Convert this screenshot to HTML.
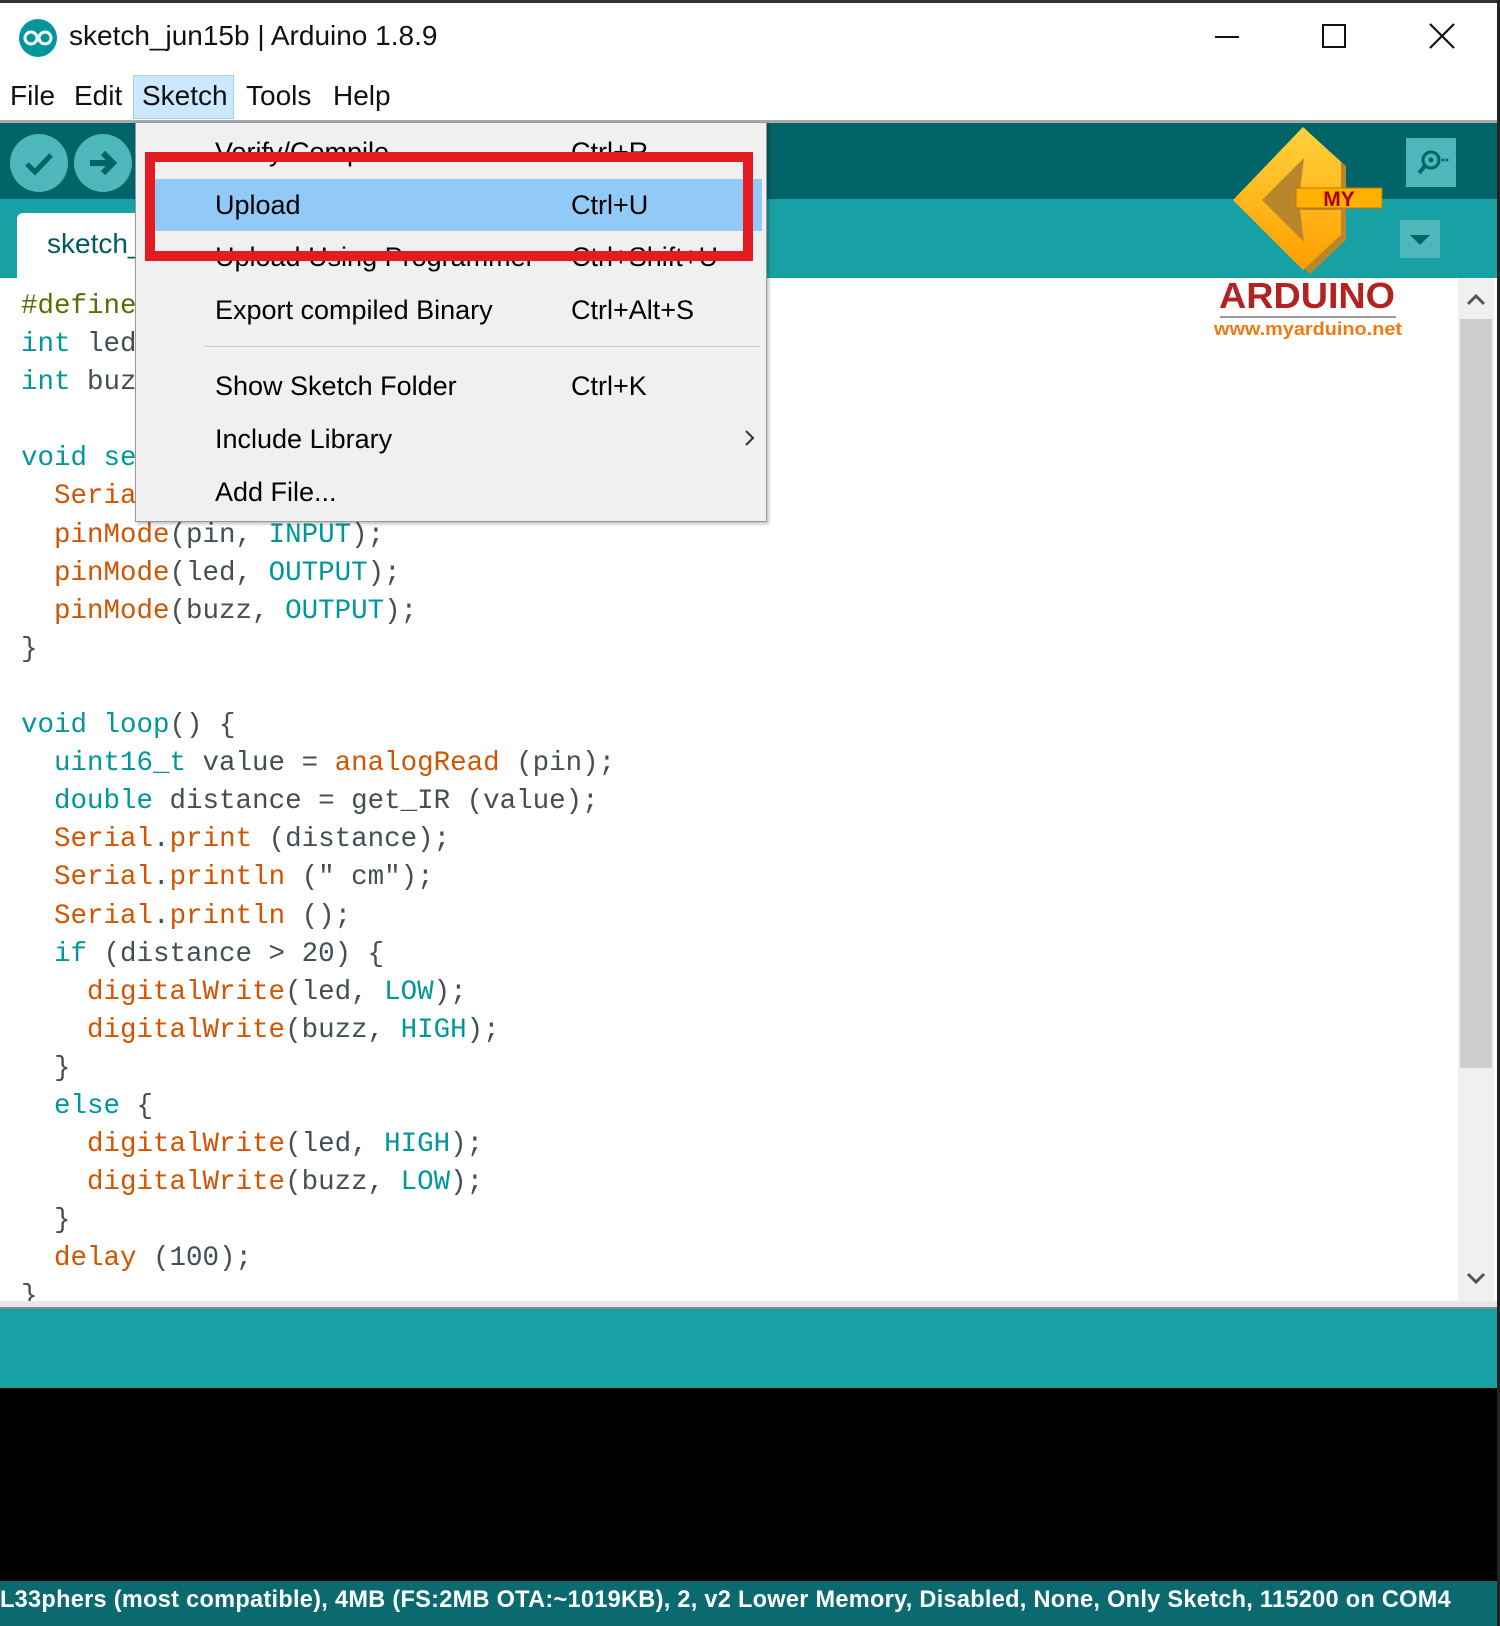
<!DOCTYPE html>
<html><head><meta charset="utf-8"><style>
*{margin:0;padding:0;box-sizing:border-box}
body{width:1500px;height:1626px;position:relative;overflow:hidden;background:#fff;font-family:"Liberation Sans",sans-serif}
.abs{position:absolute}
.code{position:absolute;left:21px;font-family:"Liberation Mono",monospace;font-size:27.5px;color:#434f54;white-space:pre;line-height:38.1px}
.k{color:#00979c}.f{color:#d35400}.d{color:#5e6d03}
.mi{position:absolute;left:215px;font-size:27px;color:#000;white-space:nowrap}
.ms{position:absolute;left:571px;font-size:27px;color:#000;white-space:nowrap}
</style></head><body>
<!-- title bar -->
<div class="abs" style="left:0;top:0;width:1500px;height:3px;background:#333"></div>
<svg class="abs" style="left:18px;top:18px" width="40" height="40" viewBox="0 0 40 40"><circle cx="20" cy="20" r="19" fill="#00979c"/><circle cx="13" cy="20" r="6" fill="none" stroke="#fff" stroke-width="3"/><circle cx="27" cy="20" r="6" fill="none" stroke="#fff" stroke-width="3"/></svg>
<div class="abs" style="left:69px;top:20px;font-size:28px;color:#111">sketch_jun15b | Arduino 1.8.9</div>
<div class="abs" style="left:1215px;top:36px;width:24px;height:2px;background:#111"></div>
<div class="abs" style="left:1322px;top:24px;width:24px;height:24px;border:2px solid #111"></div>
<svg class="abs" style="left:1429px;top:23px" width="26" height="26"><path d="M1 1L25 25M25 1L1 25" stroke="#111" stroke-width="2.2"/></svg>
<!-- menu bar -->
<div class="abs" style="left:133px;top:75px;width:101px;height:44px;background:#cce8ff;border:1px solid #99d1ff"></div>
<div class="abs" style="left:10px;top:80px;font-size:28px;color:#111">File</div>
<div class="abs" style="left:74px;top:80px;font-size:28px;color:#111">Edit</div>
<div class="abs" style="left:142px;top:80px;font-size:28px;color:#111">Sketch</div>
<div class="abs" style="left:246px;top:80px;font-size:28px;color:#111">Tools</div>
<div class="abs" style="left:333px;top:80px;font-size:28px;color:#111">Help</div>
<!-- toolbar -->
<div class="abs" style="left:0;top:120px;width:1497px;height:3px;background:#aaa"></div>
<div class="abs" style="left:0;top:123px;width:1497px;height:76px;background:#006468"></div>
<div class="abs" style="left:10px;top:134px;width:58px;height:58px;border-radius:50%;background:#4db7bb"></div>
<div class="abs" style="left:74px;top:134px;width:58px;height:58px;border-radius:50%;background:#4db7bb"></div>
<svg class="abs" style="left:10px;top:134px" width="58" height="58"><path d="M17 30l8 8 16-17" stroke="#006468" stroke-width="5" fill="none"/></svg>
<svg class="abs" style="left:74px;top:134px" width="58" height="58"><path d="M16 29h22M29 19l10 10-10 10" stroke="#006468" stroke-width="6" fill="none"/></svg>
<div class="abs" style="left:1406px;top:138px;width:50px;height:49px;background:#4db7bb"></div>
<svg class="abs" style="left:1406px;top:138px" width="50" height="49"><circle cx="25" cy="22" r="8" fill="none" stroke="#006468" stroke-width="3"/><circle cx="25" cy="22" r="2.5" fill="#006468"/><path d="M19 28l-6 7" stroke="#006468" stroke-width="4"/><circle cx="37" cy="22" r="1.5" fill="#006468"/><circle cx="41" cy="22" r="1.5" fill="#006468"/></svg>
<!-- tab strip -->
<div class="abs" style="left:0;top:199px;width:1497px;height:79px;background:#17a1a5"></div>
<div class="abs" style="left:17px;top:213px;width:200px;height:65px;background:#fff;border-radius:6px 6px 0 0"></div>
<div class="abs" style="left:47px;top:228px;font-size:28px;color:#005c5f">sketch_jun15b</div>
<div class="abs" style="left:1400px;top:220px;width:40px;height:38px;background:#4db7bb"></div>
<svg class="abs" style="left:1400px;top:220px" width="40" height="38"><path d="M10 15h20l-10 10z" fill="#006468"/></svg>
<!-- right edge -->
<div class="abs" style="left:1497px;top:0;width:3px;height:1626px;background:#222"></div>
<!-- scrollbar -->
<div class="abs" style="left:1458px;top:278px;width:36px;height:1023px;background:#f0f0f0"></div>
<div class="abs" style="left:1460px;top:319px;width:32px;height:749px;background:#cdcdcd"></div>
<svg class="abs" style="left:1464px;top:290px" width="24" height="20"><path d="M4 14l8-8 8 8" stroke="#555" stroke-width="3" fill="none"/></svg>
<svg class="abs" style="left:1464px;top:1268px" width="24" height="20"><path d="M4 6l8 8 8-8" stroke="#555" stroke-width="3" fill="none"/></svg>
<!-- code -->
<div class="code" style="top:288px"><span class="d">#define</span> pin A0
<span class="k">int</span> led = 13;
<span class="k">int</span> buzz = 12;

<span class="k">void</span> <span class="k">setup</span>() {
  <span class="f">Serial</span>.<span class="f">begin</span>(115200);
  <span class="f">pinMode</span>(pin, <span class="k">INPUT</span>);
  <span class="f">pinMode</span>(led, <span class="k">OUTPUT</span>);
  <span class="f">pinMode</span>(buzz, <span class="k">OUTPUT</span>);
}

<span class="k">void</span> <span class="k">loop</span>() {
  <span class="k">uint16_t</span> value = <span class="f">analogRead</span> (pin);
  <span class="k">double</span> distance = get_IR (value);
  <span class="f">Serial</span>.<span class="f">print</span> (distance);
  <span class="f">Serial</span>.<span class="f">println</span> (" cm");
  <span class="f">Serial</span>.<span class="f">println</span> ();
  <span class="k">if</span> (distance &gt; 20) {
    <span class="f">digitalWrite</span>(led, <span class="k">LOW</span>);
    <span class="f">digitalWrite</span>(buzz, <span class="k">HIGH</span>);
  }
  <span class="k">else</span> {
    <span class="f">digitalWrite</span>(led, <span class="k">HIGH</span>);
    <span class="f">digitalWrite</span>(buzz, <span class="k">LOW</span>);
  }
  <span class="f">delay</span> (100);
}</div>
<!-- bottom -->
<div class="abs" style="left:0;top:1301px;width:1497px;height:8px;background:#e8e8e8;border-bottom:2px solid #888"></div>
<div class="abs" style="left:0;top:1309px;width:1497px;height:79px;background:#17a1a5"></div>
<div class="abs" style="left:0;top:1388px;width:1497px;height:193px;background:#000"></div>
<div class="abs" style="left:0;top:1581px;width:1497px;height:45px;background:#0a6a6f"></div>
<div class="abs" style="left:0;top:1586px;font-size:24px;font-weight:bold;color:#fff;white-space:nowrap;transform:scaleX(0.98);transform-origin:0 0;letter-spacing:0.3px">L33phers (most compatible), 4MB (FS:2MB OTA:~1019KB), 2, v2 Lower Memory, Disabled, None, Only Sketch, 115200 on COM4</div>
<!-- logo -->
<svg class="abs" style="left:0;top:0" width="1500" height="400">
<defs><linearGradient id="g" x1="0" y1="0" x2="0" y2="1"><stop offset="0" stop-color="#ffd23c"/><stop offset="1" stop-color="#ff9e00"/></linearGradient></defs>
<path d="M1306 130 L1346 166 L1346 240 L1310 274 L1238 204 Z" fill="#b8862b"/>
<path d="M1303 127 L1341 162 L1341 190 L1300 190 L1304 158 L1262 200 L1304 242 L1300 210 L1341 210 L1341 235 L1303 270 L1233 200 Z" fill="url(#g)"/>
<rect x="1296" y="188" width="86" height="20" fill="#ffb000" stroke="#c07a00"/>
<text x="1339" y="206" text-anchor="middle" font-family="Liberation Sans" font-weight="bold" font-size="21" fill="#a00">MY</text>
<text x="1219" y="308" font-family="Liberation Sans" font-weight="bold" font-size="36" fill="#b22222" textLength="176" lengthAdjust="spacingAndGlyphs">ARDUINO</text>
<rect x="1220" y="316" width="176" height="2" fill="#999"/>
<text x="1214" y="335" font-family="Liberation Sans" font-weight="bold" font-size="18" fill="#f07a10" textLength="188" lengthAdjust="spacingAndGlyphs">www.myarduino.net</text>
</svg>
<!-- dropdown menu -->
<div class="abs" style="left:135px;top:122px;width:632px;height:400px;background:#f0f0f0;border:1px solid #999;box-shadow:2px 2px 3px rgba(0,0,0,.25)"></div>
<div class="abs" style="left:155px;top:179px;width:607px;height:52px;background:#91c9f7"></div>
<div class="mi" style="top:137px">Verify/Compile</div><div class="ms" style="top:137px">Ctrl+R</div>
<div class="mi" style="top:190px">Upload</div><div class="ms" style="top:190px">Ctrl+U</div>
<div class="mi" style="top:242px">Upload Using Programmer</div><div class="ms" style="top:242px">Ctrl+Shift+U</div>
<div class="mi" style="top:295px">Export compiled Binary</div><div class="ms" style="top:295px">Ctrl+Alt+S</div>
<div class="abs" style="left:205px;top:346px;width:555px;height:1px;background:#ccc"></div>
<div class="mi" style="top:371px">Show Sketch Folder</div><div class="ms" style="top:371px">Ctrl+K</div>
<div class="mi" style="top:424px">Include Library</div>
<svg class="abs" style="left:743px;top:428px" width="14" height="20"><path d="M3 3l7 7-7 7" stroke="#333" stroke-width="2" fill="none"/></svg>
<div class="mi" style="top:477px">Add File...</div>
<!-- red box -->
<div class="abs" style="left:145px;top:152px;width:608px;height:109px;border:10px solid #e31b23"></div>
</body></html>
